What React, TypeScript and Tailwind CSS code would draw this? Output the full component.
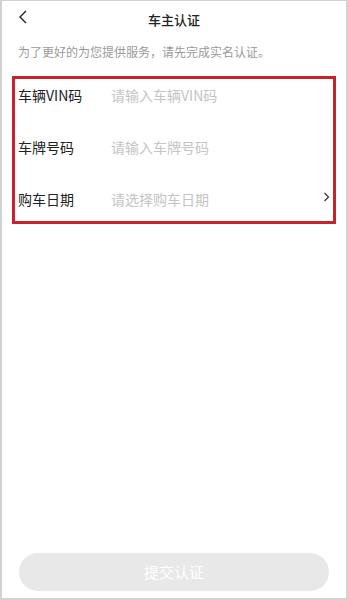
const fields = [
  { label: "车辆VIN码", placeholder: "请输入车辆VIN码" },
  { label: "车牌号码", placeholder: "请输入车牌号码" },
  { label: "购车日期", placeholder: "请选择购车日期", arrow: true },
];

const font = { fontFamily: '"Noto Sans CJK SC", "Noto Sans", sans-serif' };

export default function App() {
  return (
    <div
      style={font}
      className="w-[348px] h-[600px] bg-white border-2 border-t border-[#d2d2d2] flex flex-col"
    >
      {/* header */}
      <div className="relative h-[37px] flex items-center justify-center">
        <svg
          className="absolute left-[16px] top-[9px]"
          width="10"
          height="14"
          viewBox="0 0 10 14"
          fill="none"
        >
          <path d="M8 1L2 7l6 6" stroke="#222" strokeWidth="1.4" />
        </svg>
        <span className="text-[13px] leading-[18px] font-medium text-[#222]">车主认证</span>
      </div>

      <p className="mt-[5px] pl-[16px] text-[12px] leading-[18px] text-[#9a9a9a]">
        为了更好的为您提供服务，请先完成实名认证。
      </p>

      {/* form */}
      <div className="mt-[15px] mx-[10px] border-[3px] border-[#c8232c] pt-[6px] pb-[12px] pl-[3px] pr-[3px] flex flex-col gap-[32px]">
        {fields.map((f) => (
          <div key={f.label} className="h-[20px] flex items-center">
            <span className="w-[93px] shrink-0 text-[14px] leading-[20px] text-[#222]">{f.label}</span>
            <span className="flex-1 text-[14px] leading-[20px] text-[#c4c4c4]">{f.placeholder}</span>
            {f.arrow && (
              <svg width="7" height="10" viewBox="0 0 7 10" fill="none" className="mt-[-4px]">
                <path d="M1.5 1l4 4-4 4" stroke="#333" strokeWidth="1.2" />
              </svg>
            )}
          </div>
        ))}
      </div>

      <div className="flex-1" />

      <div className="px-[17px] pb-[7px]">
        <button className="w-full h-[38px] rounded-full bg-[#e8e8e8] text-white text-[15px]">
          提交认证
        </button>
      </div>
    </div>
  );
}
